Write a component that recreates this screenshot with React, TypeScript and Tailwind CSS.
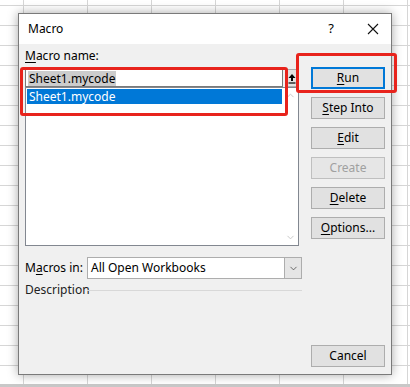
import { ChevronDown, ChevronUp } from 'lucide-react';

const font = { fontFamily: '"Segoe UI", "Noto Sans", "Open Sans", sans-serif' };

function DlgButton({ label, mnemonic, primary, disabled }: { label: string; mnemonic?: number; primary?: boolean; disabled?: boolean }) {
  const m = mnemonic ?? -1;
  return (
    <button
      className={`w-[74px] h-[22px] flex items-center justify-center text-[12px] leading-none bg-[#e1e1e1] ${
        primary ? 'border-2 border-[#0078d7]' : 'border border-[#adadad]'
      } ${disabled ? 'text-[#a0a0a0] bg-[#e6e6e6] border-[#bfbfbf]' : 'text-black'}`}
    >
      {m >= 0 ? (
        <span>
          {label.slice(0, m)}
          <span className="underline underline-offset-2">{label[m]}</span>
          {label.slice(m + 1)}
        </span>
      ) : (
        label
      )}
    </button>
  );
}

export default function App() {
  return (
    <div
      className="relative w-[410px] h-[387px] overflow-hidden bg-white bg-[linear-gradient(to_right,#d6d6d6_1px,transparent_1px),linear-gradient(to_bottom,#d6d6d6_1px,transparent_1px)] bg-[size:64px_20px] bg-[position:23px_5px]"
      style={font}
    >
      <div className="absolute left-0 right-0 top-[384px] h-[3px] bg-[#c8c8c8]" />

      <div className="absolute left-[18px] top-[13px] w-[374px] h-[362px] flex flex-col border border-[#7a7a7a] shadow-[0_0_10px_rgba(0,0,0,0.35)] bg-[#f0f0f0]">
        <div className="h-[30px] shrink-0 bg-white flex items-center pl-[9px] text-[12px] text-black">
          <span className="flex-1">Macro</span>
          <span className="w-[20px] text-center text-[13px] mr-[26px]">?</span>
          <svg width="12" height="12" viewBox="0 0 12 12" className="mr-[12px]">
            <path d="M1 1 L11 11 M11 1 L1 11" stroke="#111" strokeWidth="1.1" />
          </svg>
        </div>

        <div className="flex flex-1 pl-[6px] pr-[6px]">
          <div className="w-[277px] flex flex-col">
            <div className="h-[24px] flex items-end text-[12px] pb-[3px]">
              <span>
                <span className="underline underline-offset-2">M</span>acro name:
              </span>
            </div>
            <div className="flex h-[18px] mt-[1px]">
              <div className="w-[258px] h-[18px] bg-white border border-[#7a7a7a] flex items-center pl-[2px]">
                <span className="bg-[#cccccc] text-[12px] leading-[15px] px-[1px]">Sheet1.mycode</span>
              </div>
              <div className="ml-[2px] w-[14px] h-[18px] bg-[#e1e1e1] border border-[#adadad] flex items-center justify-center">
                <svg width="8" height="11" viewBox="0 0 8 11">
                  <path d="M4 1 L7.5 5 L5 5 L5 8 L3 8 L3 5 L0.5 5 Z" fill="#000" />
                  <path d="M0.5 10 L7.5 10" stroke="#000" strokeWidth="1.2" />
                </svg>
              </div>
            </div>
            <div className="w-[274px] h-[159px] bg-white border border-[#828790] flex">
              <div className="flex-1 pt-[1px] pl-[1px]">
                <div className="h-[15px] bg-[#0078d7] text-white text-[12px] leading-[15px] pl-[2px]">Sheet1.mycode</div>
              </div>
              <div className="w-[16px] flex flex-col justify-between items-center py-[2px] text-[#c5c5c5]">
                <ChevronUp size={11} strokeWidth={2} />
                <ChevronDown size={11} strokeWidth={2} />
              </div>
            </div>

            <div className="flex items-center mt-[11px] h-[22px] text-[12px]">
              <span className="w-[62px]">
                M<span className="underline underline-offset-2">a</span>cros in:
              </span>
              <div className="w-[215px] h-[22px] flex bg-white border border-[#adadad]">
                <span className="flex-1 flex items-center pl-[3px]">All Open Workbooks</span>
                <div className="w-[17px] border-l border-[#adadad] bg-[#e5e5e5] flex items-center justify-center">
                  <ChevronDown size={11} strokeWidth={1.5} className="text-[#333]" />
                </div>
              </div>
            </div>
            <div className="flex items-center mt-[2px] h-[18px] text-[12px] text-[#222]">
              <span className="w-[62px]">Description</span>
              <div className="flex-1 border-t border-[#d8d8d8]" />
            </div>
          </div>

          <div className="ml-[9px] flex flex-col pt-[23px]">
            <div className="flex flex-col gap-[8px]">
              <DlgButton label="Run" mnemonic={0} primary />
              <DlgButton label="Step Into" mnemonic={0} />
              <DlgButton label="Edit" mnemonic={0} />
              <DlgButton label="Create" disabled />
              <DlgButton label="Delete" mnemonic={0} />
              <DlgButton label="Options..." mnemonic={0} />
            </div>
            <div className="mt-auto mb-[7px]">
              <DlgButton label="Cancel" />
            </div>
          </div>
        </div>
      </div>

      <div className="absolute left-[20px] top-[67px] w-[268px] h-[49px] border-[3px] border-[#e8231c] rounded-[3px]" />
      <div className="absolute left-[296px] top-[53px] w-[101px] h-[40px] border-[3px] border-[#e8231c] rounded-[3px]" />
    </div>
  );
}
